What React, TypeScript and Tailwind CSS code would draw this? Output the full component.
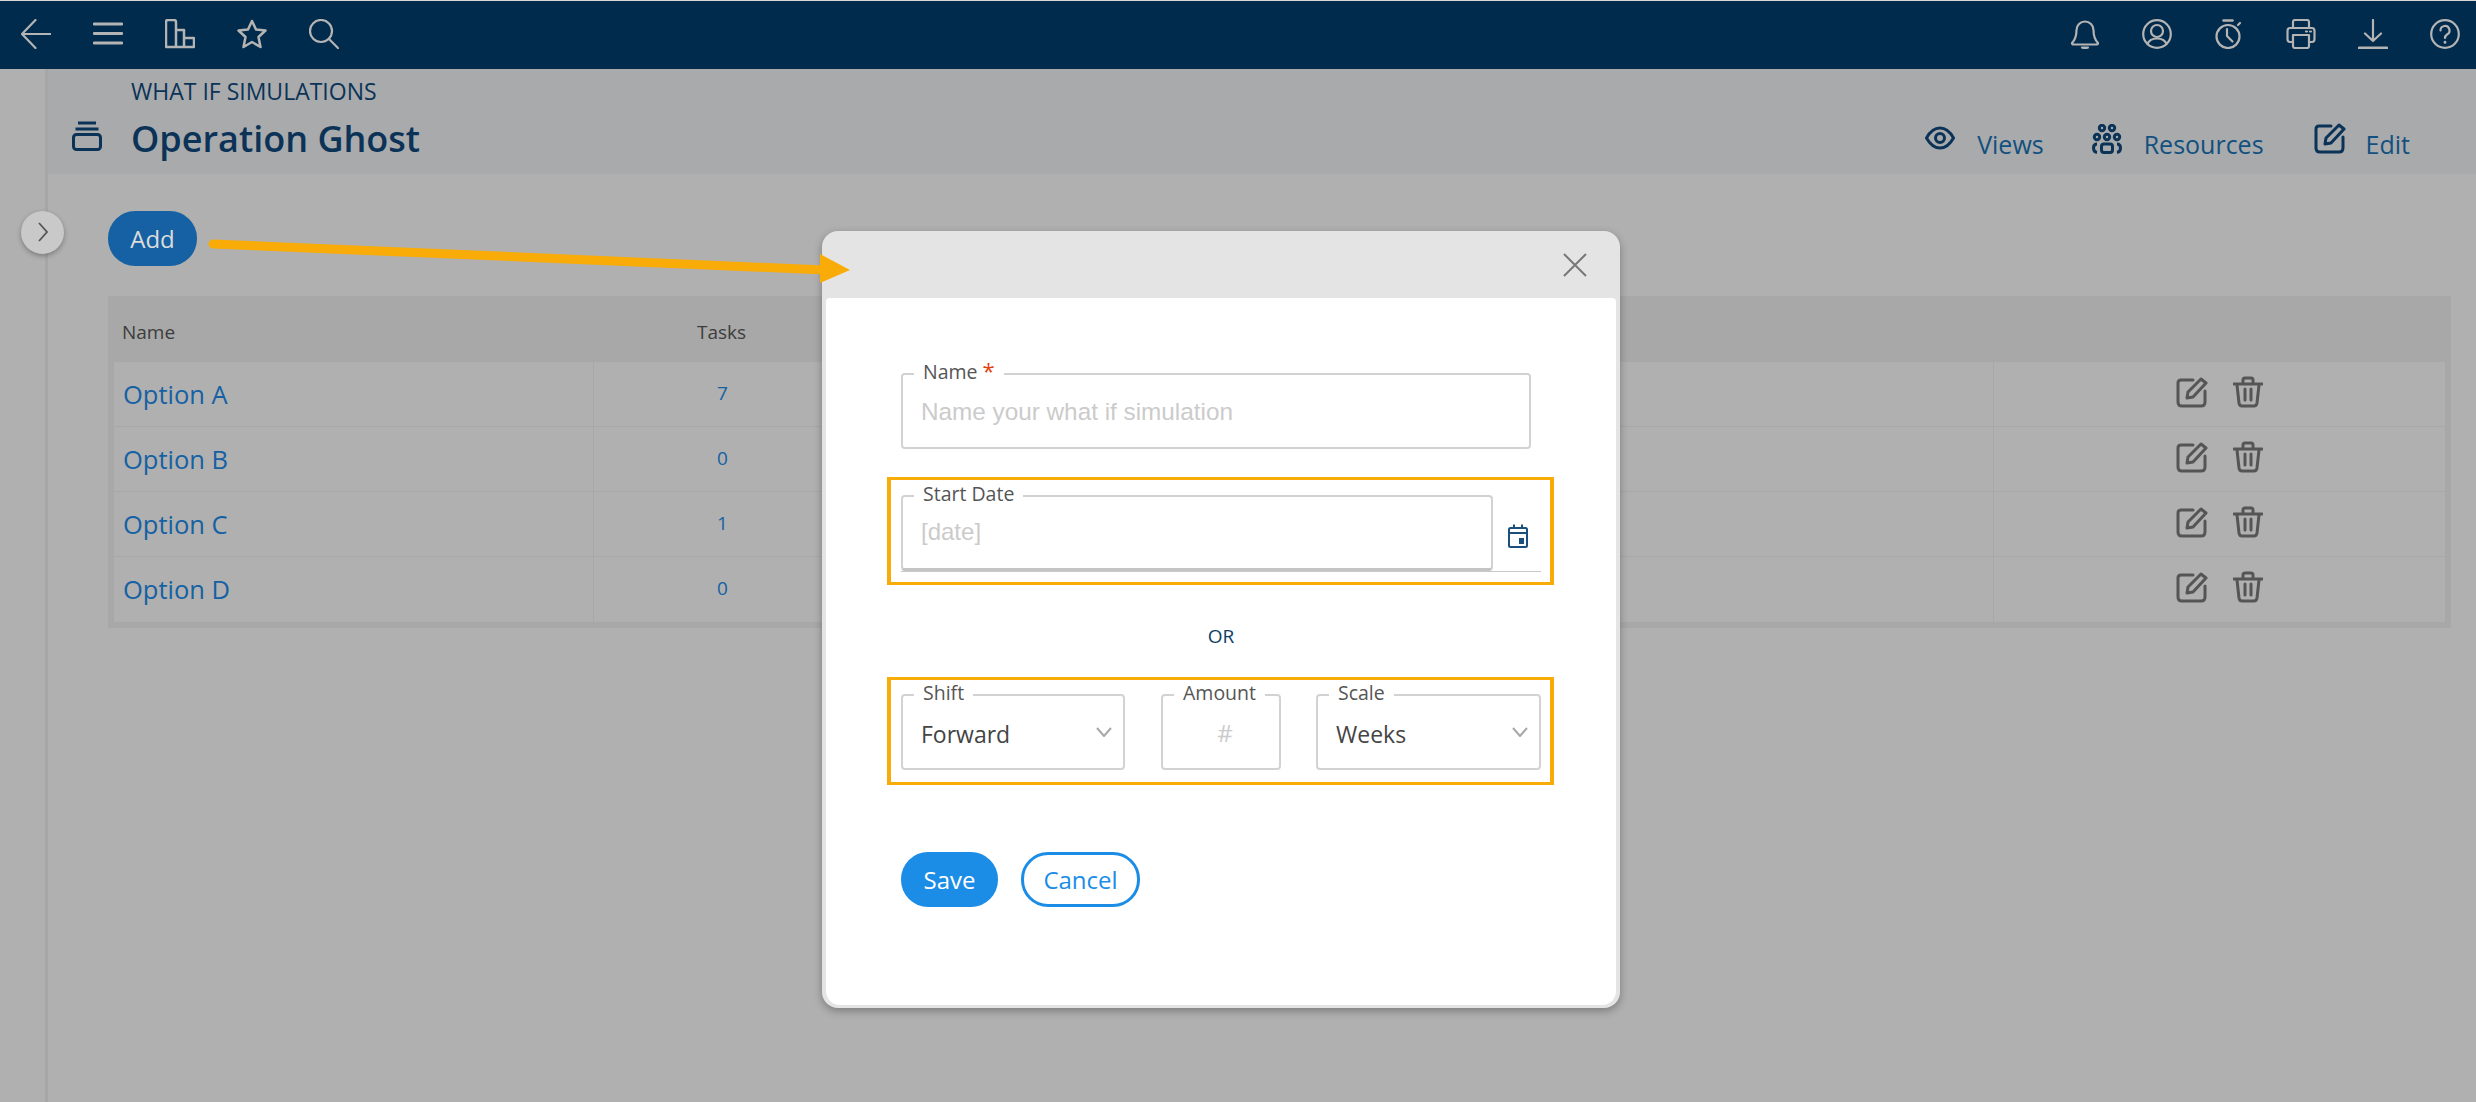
import type { ReactNode } from "react";

const font = "font-['Open_Sans',sans-serif]";
const rows = [
  { name: "Option A", tasks: 7 },
  { name: "Option B", tasks: 0 },
  { name: "Option C", tasks: 1 },
  { name: "Option D", tasks: 0 },
];

function TopIcon({ children, className = "" }: { children: ReactNode; className?: string }) {
  return (
    <svg
      viewBox="0 0 30 30"
      fill="none"
      stroke="currentColor"
      strokeWidth="2.2"
      strokeLinecap="round"
      strokeLinejoin="round"
      className={`h-[30px] w-[30px] shrink-0 ${className}`}
    >
      {children}
    </svg>
  );
}

function EditIcon({ className = "" }: { className?: string }) {
  return (
    <svg
      viewBox="0 0 32 32"
      fill="none"
      stroke="currentColor"
      strokeWidth="3"
      strokeLinecap="round"
      strokeLinejoin="round"
      className={`h-[32px] w-[32px] shrink-0 ${className}`}
    >
      <path d="M17 4H5Q2 4 2 7V26Q2 30 6 30H25Q29 30 29 26V15" />
      <path d="M11 22L12 16L25 3L30 7L17 21Z" />
    </svg>
  );
}

function TrashIcon() {
  return (
    <svg
      viewBox="0 0 30 32"
      fill="none"
      stroke="currentColor"
      strokeWidth="3"
      strokeLinecap="round"
      strokeLinejoin="round"
      className="h-[32px] w-[30px] shrink-0"
    >
      <path d="M1 8H29" />
      <path d="M10 7V4Q10 2 12 2H18Q20 2 20 4V7" />
      <path d="M4 9L6 27Q6.500 30 9 30H21Q23.500 30 24 27L26 9" />
      <path d="M12 13V24M18 13V24" />
    </svg>
  );
}

function Chevron() {
  return (
    <svg viewBox="0 0 16 10" fill="none" stroke="#a8a8a8" strokeWidth="2" className="h-[10px] w-[16px]">
      <path d="M1 1L8 9L15 1" />
    </svg>
  );
}

function Field({
  label,
  className = "",
  children,
}: {
  label: ReactNode;
  className?: string;
  children: ReactNode;
}) {
  return (
    <div className={`relative h-[76px] shrink-0 rounded-[4px] border-2 border-[#d2d2d2] ${className}`}>
      <span className="absolute -top-[16px] left-[11px] bg-white px-[9px] text-[19.500px] leading-[26px] text-[#555]">
        {label}
      </span>
      {children}
    </div>
  );
}

function SelectField({ label, value, className }: { label: string; value: string; className: string }) {
  return (
    <Field label={label} className={className}>
      <div className="flex h-full items-start justify-between pl-[18px] pr-[11px] pt-[22px] text-[23px] leading-[32px] text-[#444]">
        <span>{value}</span>
        <span className="pt-[9px]">
          <Chevron />
        </span>
      </div>
    </Field>
  );
}

export default function App() {
  return (
    <div className={`relative flex h-[1102px] w-[2476px] flex-col overflow-hidden bg-[#b0b0b0] ${font}`}>
      <div className="h-px bg-[#d8d8d8]" />
      <header className="flex h-[68px] items-center justify-between bg-[#002b4c] pb-[2px] text-[#b4b4b4]">
        <div className="flex items-center gap-[42px] pl-[21px]">
          <TopIcon>
            <path d="M29.500 15H1M14.500 1L1 15L14.500 29" />
          </TopIcon>
          <TopIcon>
            <path d="M1 5H29M1 14.500H29M1 24H29" strokeWidth="2.800" />
          </TopIcon>
          <TopIcon>
            <path d="M1 28V3Q1 1 3 1H9Q11 1 11 3V28ZM11 11H19V28H11ZM19 19H29V28H19Z" strokeWidth="2.500" />
          </TopIcon>
          <TopIcon>
            <path d="M15 2L19 10.500L28.500 11.500L21.500 18L23.500 28L15 23L6.500 28L8.500 18L1.500 11.500L11 10.500Z" strokeWidth="2.500" />
          </TopIcon>
          <TopIcon>
            <circle cx="12" cy="12" r="11" />
            <path d="M20 20L29.500 29.500" />
          </TopIcon>
        </div>
        <div className="flex items-center gap-[42px] pr-[16px]">
          <TopIcon>
            <path d="M2 24C5 21 6.500 18 6.500 11A8.500 8.500 0 0 1 23.500 11C23.500 18 25 21 28 24Q28 25.500 26 25.500H4Q2 25.500 2 24Z" />
            <path d="M12 28.500H18L15 29.500Z" fill="currentColor" />
          </TopIcon>
          <TopIcon>
            <circle cx="15" cy="15" r="13.800" />
            <circle cx="15" cy="12" r="6" />
            <path d="M5.500 25C7 21 11 19.500 15 19.500S23 21 24.500 25" />
          </TopIcon>
          <TopIcon>
            <circle cx="14" cy="17.500" r="11.500" />
            <path d="M9.500 1.500H18.500" strokeWidth="2.500" />
            <path d="M13 10V17L18.500 22.500M24 6L26 4" />
          </TopIcon>
          <TopIcon>
            <path d="M7 9V3Q7 1 9 1H21Q23 1 23 3V9" />
            <path d="M7 23H4Q1.500 23 1.500 20V12Q1.500 9 4 9H26Q28.500 9 28.500 12V20Q28.500 23 26 23H23" />
            <path d="M7 16H23V27Q23 29 21 29H9Q7 29 7 27Z" />
            <path d="M20 12.500H21M24 12.500H25" />
          </TopIcon>
          <TopIcon>
            <path d="M15 1V22M7 14.500L15 22L23 14.500" />
            <path d="M1 29H29" strokeWidth="2.800" />
          </TopIcon>
          <TopIcon>
            <circle cx="15" cy="15" r="13.800" />
            <path d="M10.500 11.500A4.500 4.500 0 1 1 17 15.500Q15 17 15 19" />
            <path d="M15 23.200V23.400" strokeWidth="2.800" />
          </TopIcon>
        </div>
      </header>

      <div className="flex flex-1">
        <aside className="w-[48px] shrink-0 border-r-[3px] border-[#a6a6a6]" />
        <main className="min-w-0 flex-1">
          <div className="flex h-[105px] justify-between bg-[#a9aaac]">
            <div className="pl-[24px] pt-[5px] text-[#0b3357]">
              <div className="pl-[59px] text-[23px] leading-[34px]">WHAT IF SIMULATIONS</div>
              <div className="mt-[7px] flex h-[48px] items-center gap-[29px]">
                <svg viewBox="0 0 30 30" fill="none" stroke="currentColor" strokeWidth="3" className="-mt-[6px] h-[30px] w-[30px]">
                  <path d="M6 2H24M3.500 8H26.500" />
                  <rect x="1.500" y="13.500" width="27" height="15" rx="3" />
                </svg>
                <span className="text-[36px] font-semibold leading-[48px]">Operation Ghost</span>
              </div>
            </div>
            <div className="flex items-center pb-[9px] pr-[66px] pt-[53px] text-[25px] leading-[34px] text-[#11507f]">
              <svg viewBox="0 0 30 24" fill="none" stroke="#0b3357" strokeWidth="3" strokeLinejoin="round" className="-mt-[12px] mr-[22px] h-[24px] w-[30px]">
                <path d="M1.500 12Q7 2 15 2T28.500 12Q23 22 15 22T1.500 12Z" />
                <circle cx="15" cy="12" r="4.500" />
              </svg>
              <span>Views</span>
              <svg viewBox="0 0 30 30" fill="none" stroke="#0b3357" strokeWidth="3" className="-mt-[10px] ml-[48px] mr-[22px] h-[30px] w-[30px]">
                <circle cx="10" cy="4" r="2.700" />
                <circle cx="20" cy="4" r="2.700" />
                <circle cx="5" cy="13" r="2.700" />
                <circle cx="15" cy="13" r="2.700" />
                <circle cx="25" cy="13" r="2.700" />
                <path d="M5 20Q1.500 20 1.500 24T5 28.500M25 20Q28.500 20 28.500 24T25 28.500" />
                <rect x="9.500" y="20" width="11" height="8.500" rx="2.500" />
              </svg>
              <span>Resources</span>
              <EditIcon className="-mt-[11px] ml-[50px] mr-[20px] text-[#0b3357]" />
              <span>Edit</span>
            </div>
          </div>

          <div className="pl-[60px] pt-[37px]">
            <button className="h-[55px] w-[89px] rounded-[27px] bg-[#1561a3] text-[24px] text-[#dcdcdc]">Add</button>
            <div className="mt-[30px] h-[332px] w-[2343px] bg-[#a8a8a8] px-[6px] text-[19px]">
              <div className="flex h-[66px] items-center pt-[6px] text-[#3d3d3d]">
                <div className="w-[480px] pl-[8px]">Name</div>
                <div className="w-[255px] text-center">Tasks</div>
              </div>
              {rows.map((row) => (
                <div key={row.name} className="flex h-[65px] border-b border-[#a8a8a8] bg-[#b0b0b0] text-[#1561a3] last:border-b-0">
                  <div className="flex w-[480px] items-center border-r border-[#a8a8a8] pl-[9px] text-[25.500px]">
                    {row.name}
                  </div>
                  <div className="w-[257px] pt-[17px] text-center text-[19px]">{row.tasks}</div>
                  <div className="w-[1142px]" />
                  <div className="flex flex-1 items-start justify-center gap-[25px] border-l border-[#a8a8a8] pr-[1px] pt-[14px] text-[#555]">
                    <EditIcon />
                    <TrashIcon />
                  </div>
                </div>
              ))}
            </div>
          </div>
        </main>
      </div>

      <button className="absolute left-[21px] top-[211px] flex h-[43px] w-[43px] items-center justify-center rounded-full bg-[#c9c9c9] shadow-[0_2px_5px_rgba(0,0,0,0.3)]">
        <svg viewBox="0 0 12 20" fill="none" stroke="#555" strokeWidth="1.800" className="-mt-[2px] h-[20px] w-[12px]">
          <path d="M2 1L10 10L2 19" />
        </svg>
      </button>

      <div className="absolute left-[822px] top-[231px] flex h-[777px] w-[798px] flex-col rounded-[16px] bg-[#e4e4e4] px-[4px] pb-[3px] shadow-[0_3px_8px_rgba(0,0,0,0.3)]">
        <div className="flex h-[67px] shrink-0 items-start justify-end pr-[29px] pt-[22px]">
          <svg viewBox="0 0 24 24" fill="none" stroke="#777" strokeWidth="2" className="h-[24px] w-[24px]">
            <path d="M1 1L23 23M23 1L1 23" />
          </svg>
        </div>
        <div className="flex-1 rounded-[4px] rounded-b-[14px] bg-white px-[61px] pt-[75px]">
          <Field
            className="ml-[14px] w-[630px]"
            label={
              <>
                Name <span className="text-[22px] leading-none text-[#e8400c]">*</span>
              </>
            }
          >
            <input
              readOnly
              placeholder="Name your what if simulation"
              className="h-full w-full bg-transparent pt-[2px] pl-[18px] font-['Liberation_Sans',sans-serif] text-[24.300px] outline-none placeholder:text-[#cbcbcb]"
            />
          </Field>

          <div className="mt-[28px] h-[108px] w-[667px] border-x-4 border-y-[3px] border-[#f9ac07] pl-[10px] pt-[15px]">
            <div className="flex w-[640px] border-b border-[#c8c8c8]">
              <Field label="Start Date" className="h-[75px] w-[592px] border-b-[3px] border-b-[#c4c4c4]">
                <input
                  readOnly
                  placeholder="[date]"
                  className="h-full w-full bg-transparent pb-[1px] pl-[18px] font-['Liberation_Sans',sans-serif] text-[24px] outline-none placeholder:text-[#cbcbcb]"
                />
              </Field>
              <div className="flex flex-1 justify-center pl-[1px] pt-[29px]">
                <svg viewBox="0 0 20 24" fill="none" stroke="#1b4f7c" strokeWidth="2" className="h-[24px] w-[20px]">
                  <rect x="1" y="4" width="18" height="19" rx="1.500" />
                  <path d="M1 9H19M6 0.500V5M14 0.500V5" />
                  <rect x="11" y="14" width="5" height="6" fill="#1b4f7c" stroke="none" />
                </svg>
              </div>
            </div>
          </div>

          <div className="mt-[38px] text-center text-[19px] leading-[26px] text-[#0f3f66]">OR</div>

          <div className="mt-[28px] flex h-[108px] w-[667px] items-start border-x-4 border-y-[3px] border-[#f9ac07] pl-[10px] pt-[14px]">
            <SelectField label="Shift" value="Forward" className="w-[224px]" />
            <Field label="Amount" className="ml-[36px] w-[120px]">
              <input
                readOnly
                placeholder="#"
                className="h-full w-full bg-transparent pl-[8px] text-center text-[24px] outline-none placeholder:text-[#cbcbcb]"
              />
            </Field>
            <SelectField label="Scale" value="Weeks" className="ml-[35px] w-[225px]" />
          </div>

          <div className="ml-[14px] mt-[67px] flex gap-[23px] text-[24px]">
            <button className="h-[55px] w-[97px] rounded-[27px] bg-[#1b8de6] text-white">Save</button>
            <button className="h-[55px] w-[119px] rounded-[27px] border-[3px] border-[#1b8de6] bg-white text-[#1b8de6]">
              Cancel
            </button>
          </div>
        </div>
      </div>

      <svg viewBox="0 0 650 55" className="absolute left-[205px] top-[235px] h-[55px] w-[650px]">
        <path d="M8 9L620 35" stroke="#f9ac07" strokeWidth="9" strokeLinecap="round" />
        <polygon points="615,19 645,35 615,48" fill="#f9ac07" />
      </svg>
    </div>
  );
}
